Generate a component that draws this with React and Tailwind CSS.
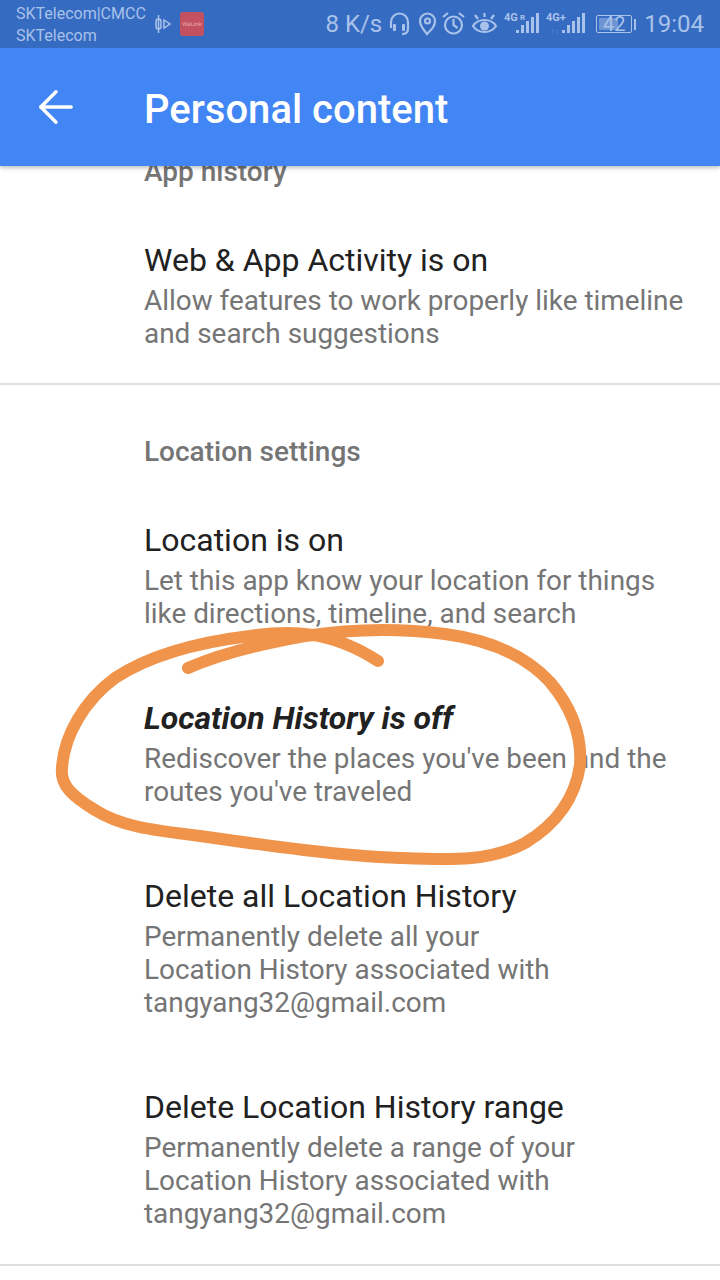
import { ArrowLeft } from 'lucide-react';

const Row = ({ title, lines, italic }) => (
  <div className="pl-[144px] pr-[20px]">
    <div className={`text-[32px] leading-[40px] text-[#212121] ${italic ? 'font-bold italic' : ''}`}>{title}</div>
    <div className="mt-[4px]">
      {lines.map((line) => (
        <div key={line} className="text-[27.9px] leading-[33px] text-[#757575] whitespace-nowrap">
          {line}
        </div>
      ))}
    </div>
  </div>
);

const StatusIcons = () => (
  <svg width="202" height="32" viewBox="388 8 202 32" fill="none" stroke="#a9c2ea" strokeWidth="2.200" className="shrink-0">
    {/* headset */}
    <path d="M392 28v-6a8.500 8.500 0 0 1 17 0v7c0 3-2 5-6 5" />
    <rect x="394" y="24" width="3" height="7" rx="1" fill="#a9c2ea" stroke="none" />
    <rect x="403" y="24" width="3" height="7" rx="1" fill="#a9c2ea" stroke="none" />
    {/* pin */}
    <path d="M428 34c-4-5-7-8-7-13a7.500 7.500 0 0 1 15 0c0 5-3 8-8 13z" />
    <circle cx="428.500" cy="21" r="2.500" />
    {/* alarm */}
    <circle cx="454.500" cy="25" r="8.500" />
    <path d="M454.500 19v6l4 3M444 17l5-4M465 17l-5-4" />
    {/* eye */}
    <path d="M474 26c5-8 18-8 23 0c-5 8-18 8-23 0z" />
    <circle cx="485.500" cy="26" r="4.500" fill="#a9c2ea" stroke="none" />
    <path d="M476 15l3 4M485.500 13v4M495 15l-3 4" />
    <g fill="#a9c2ea" stroke="none">
      {/* first signal */}
      <text x="505" y="21" fontSize="11" fontWeight="700" fontFamily="Roboto, sans-serif">4G</text>
      <text x="521" y="20" fontSize="8" fontWeight="700" fontFamily="Roboto, sans-serif">R</text>
      <rect x="517" y="30" width="3" height="3" />
      <rect x="522" y="25" width="3" height="8" />
      <rect x="527" y="21" width="3" height="12" />
      <rect x="532" y="17" width="3" height="16" />
      <rect x="537" y="13" width="3" height="20" />
      {/* second signal */}
      <text x="547" y="21" fontSize="11" fontWeight="700" fontFamily="Roboto, sans-serif">4G+</text>
      <text x="552" y="34" fontSize="8" fontWeight="700" fontFamily="Roboto, sans-serif" opacity="0.45">↑↓</text>
      <rect x="563" y="30" width="3" height="3" />
      <rect x="568" y="25" width="3" height="8" />
      <rect x="573" y="21" width="3" height="12" />
      <rect x="578" y="17" width="3" height="16" />
      <rect x="583" y="13" width="3" height="20" />
    </g>
  </svg>
);

const App = () => {
  return (
    <div className="relative w-[720px] h-[1280px] overflow-hidden bg-white font-['Roboto',sans-serif]">
      {/* Status bar */}
      <div className="relative z-20 h-[48px] bg-[#356bc1] flex items-center text-[#a9c2ea]">
        <div className="pl-[16px] pt-[2px] w-[150px] text-[16px] leading-[22px] whitespace-nowrap">
          <div>SKTelecom|CMCC</div>
          <div>SKTelecom</div>
        </div>
        <svg width="18" height="20" viewBox="0 0 18 20" fill="none" stroke="#a9c2ea" strokeWidth="1.500" className="ml-[4px]">
          <rect x="2" y="5" width="5" height="10" rx="2.500" />
          <path d="M4.500 1v18M10 6l6 4-6 4z" />
        </svg>
        <div className="ml-[8px] w-[24px] h-[24px] rounded-[3px] bg-[#c3515f] text-[#e8aab0] text-[6px] leading-[24px] text-center">WeLink</div>
        <div className="ml-auto flex items-center pr-[16px]">
          <span className="text-[24px] mr-[5px] whitespace-nowrap">8 K/s</span>
          <StatusIcons />
          <div className="flex items-center ml-[7px] mr-[8px]">
            <div className="relative w-[36px] h-[18px] border border-[#a9c2ea] rounded-[2px] text-[20px] leading-[16px] text-center">
              <div className="absolute left-[2px] top-[2px] bottom-[2px] w-[19px] bg-[#6f94d3]" />
              <span className="relative">42</span>
            </div>
            <div className="w-[2px] h-[11px] ml-[2px] bg-[#a9c2ea]" />
          </div>
          <span className="text-[24px] whitespace-nowrap">19:04</span>
        </div>
      </div>

      {/* App bar */}
      <div className="relative z-10 h-[118px] bg-[#4285f4] flex items-center shadow-[0_2px_4px_rgba(0,0,0,0.25)]">
        <ArrowLeft className="ml-[30px] text-white" size={52} strokeWidth={1.600} />
        <div className="ml-[62px] mt-[6px] text-[40px] font-medium text-white whitespace-nowrap">Personal content</div>
      </div>

      {/* Scrolled content */}
      <div className="-mt-[14px]">
        <div className="pl-[144px] text-[28px] leading-[40px] font-medium text-[#757575]">App history</div>
        <div className="mt-[48px]">
          <Row title="Web & App Activity is on" lines={['Allow features to work properly like timeline', 'and search suggestions']} />
        </div>
        <div className="mt-[33px] h-[2px] bg-[#e0e0e0]" />
        <div className="mt-[47px] pl-[144px] text-[28px] leading-[40px] font-medium text-[#757575]">Location settings</div>
        <div className="mt-[48px]">
          <Row title="Location is on" lines={['Let this app know your location for things', 'like directions, timeline, and search']} />
        </div>
        <div className="mt-[68px]">
          <Row italic title="Location History is off" lines={["Rediscover the places you've been and the", "routes you've traveled"]} />
        </div>
        <div className="mt-[68px]">
          <Row title="Delete all Location History" lines={['Permanently delete all your', 'Location History associated with', 'tangyang32@gmail.com']} />
        </div>
        <div className="mt-[68px]">
          <Row title="Delete Location History range" lines={['Permanently delete a range of your', 'Location History associated with', 'tangyang32@gmail.com']} />
        </div>
        <div className="mt-[34px] h-[2px] bg-[#e0e0e0]" />
      </div>

      {/* Hand-drawn circle */}
      <svg className="absolute left-0 top-0 z-0 pointer-events-none" width="720" height="1280" viewBox="0 0 720 1280" fill="none">
        <path
          d="M188 668C215 656 260 644 305 636C350 629 400 628 445 634C490 640 525 655 550 682C572 708 582 735 580 765C575 800 555 825 525 843C490 862 450 860 400 858C340 856 270 846 200 836C150 830 120 826 95 810C72 796 60 785 62 768C64 735 85 700 115 678C150 655 200 642 250 636C290 630 330 630 378 661"
          stroke="#f0944c"
          strokeWidth="12"
          strokeLinecap="round"
          strokeLinejoin="round"
        />
      </svg>
    </div>
  );
};

export default App;
